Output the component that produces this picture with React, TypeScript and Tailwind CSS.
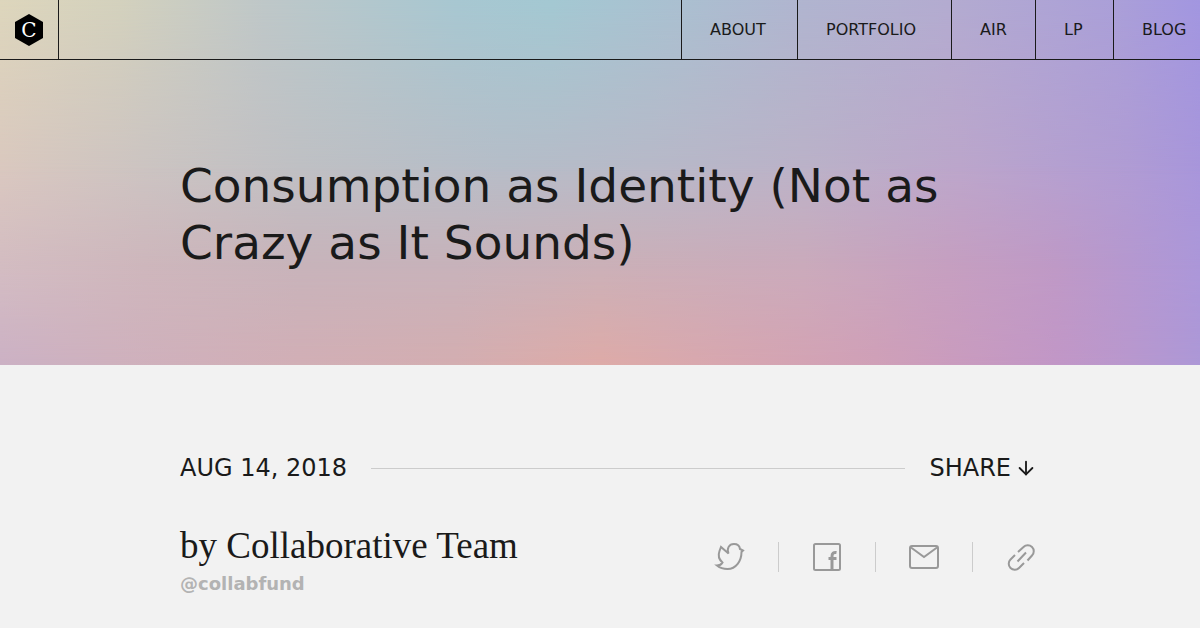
import { ReactNode } from "react";
import { ArrowDown } from "lucide-react";

const links = [
  { name: "About", width: "w-29" },
  { name: "Portfolio", width: "w-[154px]" },
  { name: "Air", width: "w-21" },
  { name: "LP", width: "w-[78px]" },
  { name: "Blog", width: "w-[87px]" },
];

function Logo() {
  return (
    <svg width="28" height="32" viewBox="0 0 28 32" aria-hidden="true">
      <path d="M14 0 28 8v16l-14 8L0 24V8z" fill="#000" />
      <text x="14" y="23" textAnchor="middle" fontSize="20" fill="#fff" fontFamily="DejaVu Serif, serif">
        C
      </text>
    </svg>
  );
}

// Each row of colour fades into the one below it
function Gradient() {
  return (
    <div className="absolute inset-0 -z-10 bg-[linear-gradient(90deg,#ccb1c5_0%,#cfb1be_9%,#d2afb6_25%,#d4aeb1_38%,#deaba8_50%,#d9a8ae_58%,#d0a0b8_73%,#c297c7_88%,#b998ce_94%,#ad98d7_100%)]">
      <div className="absolute inset-0 bg-[linear-gradient(90deg,#d3bcc2_0%,#ceb6bc_12%,#c8b3ba_25%,#c8b2ba_38%,#ccb0b7_50%,#cbaabb_67%,#c69fc0_79%,#bf99c6_88%,#ac97d9_100%)] [mask-image:linear-gradient(#000_74%,transparent_100%)]" />
      <div className="absolute inset-0 bg-[linear-gradient(90deg,#dac8bf_0%,#ccc4c2_12%,#bfc0c4_25%,#b6bdc8_42%,#b8b9c8_54%,#bbb2c8_67%,#bca6cb_80%,#b09cd4_94%,#a896db_100%)] [mask-image:linear-gradient(#000_45%,transparent_74%)]" />
      <div className="absolute inset-0 bg-[linear-gradient(90deg,#ddd6bc_0%,#d3d1bd_10%,#bec7c8_22%,#a7c7d1_38%,#a3c8d2_46%,#aabfd0_57%,#b0b4cf_67%,#b3abd0_79%,#aa9fd8_93%,#a296e0_100%)] [mask-image:linear-gradient(#000_0%,transparent_48%)]" />
    </div>
  );
}

function ShareLink({ label, children }: { label: string; children: ReactNode }) {
  return (
    <a href="#" aria-label={label} className="flex h-8 w-8 items-center justify-center text-[#999]">
      <svg width="32" height="32" viewBox="0 0 32 32" fill="none" stroke="currentColor" strokeWidth="2" aria-hidden="true">
        {children}
      </svg>
    </a>
  );
}

function Divider() {
  return <span className="h-[30px] w-px bg-[#ccc]" />;
}

export default function App() {
  return (
    <div className="min-h-screen bg-[#f2f2f2] font-['DejaVu_Sans',sans-serif] text-[#1a1a1a]">
      <div className="relative isolate">
        <Gradient />
        <header className="flex h-15 justify-between border-b border-[#1a1a1a]">
          <a href="#" aria-label="Home" className="flex w-[59px] items-center justify-center border-r border-[#1a1a1a]">
            <Logo />
          </a>
          <nav className="flex">
            {links.map((link) => (
              <a
                key={link.name}
                href="#"
                className={`flex items-center border-l border-[#1a1a1a] pl-7 text-base uppercase ${link.width}`}
              >
                {link.name}
              </a>
            ))}
          </nav>
        </header>
        <div className="pt-[97px] pr-[163px] pb-[94px] pl-45">
          <h1 className="max-w-[800px] text-[47px] leading-[57px]">
            Consumption as Identity (Not as Crazy as It Sounds)
          </h1>
        </div>
      </div>

      <main className="pt-[87px] pr-[163px] pl-45">
        <div className="flex items-center">
          <time dateTime="2018-08-14" className="text-2xl leading-8 uppercase">
            Aug 14, 2018
          </time>
          <span className="mx-6 h-px flex-1 bg-[#ccc]" />
          <button type="button" className="flex items-center gap-1 text-2xl leading-8 uppercase">
            Share
            <ArrowDown size={22} strokeWidth={2} />
          </button>
        </div>
        <div className="mt-10 flex items-start justify-between">
          <div>
            <p className="font-['Liberation_Serif',serif] text-[37px] leading-11">by Collaborative Team</p>
            <a href="#" className="block text-lg leading-8 font-bold text-[#b3b3b3]">
              @collabfund
            </a>
          </div>
          <div className="mt-[17px] flex items-center gap-8">
            <ShareLink label="Twitter">
              <path d="M3 24.500C5.500 24.500 7.500 23.500 8.500 21.500 5 18.500 4 14 5.500 10L7 6 14.500 12.500C12.500 7.500 15 3 20 3 23 3 25.500 4.500 26 8L29 9.500 27.500 11C27.500 20 22 28 13.500 28 9 28 5.500 26.500 3 24.500Z" />
            </ShareLink>
            <Divider />
            <ShareLink label="Facebook">
              <rect x="3" y="3" width="26" height="26" rx="1.500" />
              <path d="M21 29V15.500c0-3 1.500-4.500 4.500-4M17.500 17.500h8" strokeWidth="3" />
            </ShareLink>
            <Divider />
            <ShareLink label="Email">
              <rect x="2" y="5" width="28" height="22" rx="2" />
              <path d="M3 6.500 16 16 29 6.500" />
            </ShareLink>
            <Divider />
            <ShareLink label="Copy link">
              <path d="M13 11 18.500 6A5.800 5.800 0 0 1 27 14.500L22.500 19.500M10 14 5.500 18.500A5.800 5.800 0 0 0 14 27L19 22M12.500 20.500 21 11.500" />
            </ShareLink>
          </div>
        </div>
      </main>
    </div>
  );
}
